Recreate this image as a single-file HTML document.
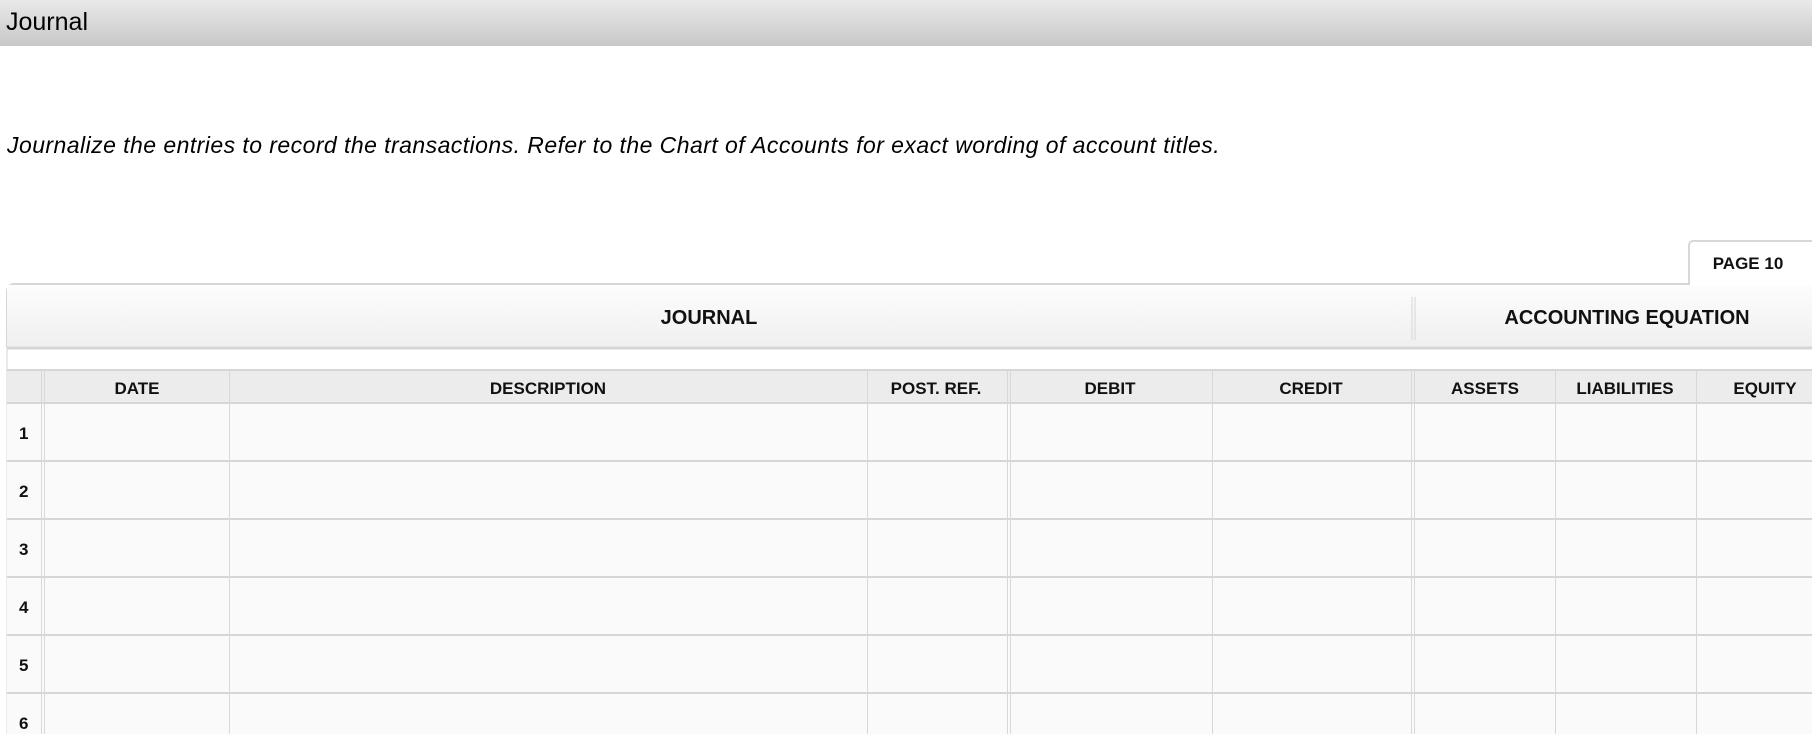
<!DOCTYPE html>
<html><head><style>
body{margin:0;width:1812px;height:734px;overflow:hidden;background:#fff;font-family:"Liberation Sans",sans-serif;position:relative}
.bar{position:absolute;left:0;top:0;width:1812px;height:46px;background:linear-gradient(#e9e9e9,#c8c8c8);}
.bar span{position:absolute;left:6px;top:8px;font-size:25px;color:#000}
.ins{position:absolute;left:7px;top:132px;font-size:23px;letter-spacing:0.45px;font-style:italic;color:#000;white-space:nowrap}
.tab{position:absolute;left:1688px;top:240px;width:130px;height:46px;border:2px solid #d8d8d8;border-bottom:none;border-radius:5px 0 0 0;background:#fff;font-size:17px;font-weight:bold;text-align:center;line-height:44px;box-sizing:border-box;padding-right:10px;color:#111}
.t{position:absolute;font-size:17px;font-weight:bold;color:#111;white-space:nowrap}
.c{position:absolute;transform:translateX(-50%)}
</style></head><body>
<div class="bar"><span>Journal</span></div>
<div class="ins">Journalize the entries to record the transactions. Refer to the Chart of Accounts for exact wording of account titles.</div>
<div class="tab">PAGE 10</div>
<svg style="position:absolute;left:0;top:0" width="1812" height="734">
<defs><linearGradient id="g" x1="0" y1="0" x2="0" y2="1"><stop offset="0" stop-color="#fdfdfd"/><stop offset="1" stop-color="#efefef"/></linearGradient></defs>
<path d="M7 348 V292 Q7 284 15 284 H1690" fill="url(#g)" stroke="#d6d6d6" stroke-width="2"/>
<rect x="7" y="285" width="1805" height="63" fill="url(#g)"/>
<line x1="7" y1="348" x2="1812" y2="348" stroke="#d6d6d6" stroke-width="3"/>
<line x1="1412" y1="297" x2="1412" y2="340" stroke="#d6d6d6"/><line x1="1415" y1="297" x2="1415" y2="340" stroke="#d6d6d6"/>
<rect x="7" y="350" width="1805" height="20" fill="#fff"/>
<line x1="7" y1="349" x2="7" y2="734" stroke="#d6d6d6"/>
<rect x="7" y="370" width="1805" height="33" fill="#ececec"/>
<line x1="7" y1="370" x2="1812" y2="370" stroke="#d6d6d6" stroke-width="2"/>
<rect x="7" y="404" width="1805" height="330" fill="#fafafa"/>
<g stroke="#d6d6d6" stroke-width="2">
<line x1="7" y1="403" x2="1812" y2="403"/><line x1="7" y1="461" x2="1812" y2="461"/><line x1="7" y1="519" x2="1812" y2="519"/><line x1="7" y1="577" x2="1812" y2="577"/><line x1="7" y1="635" x2="1812" y2="635"/><line x1="7" y1="693" x2="1812" y2="693"/>
</g>
<g stroke="#d8d8d8" stroke-width="1">
<line x1="41.5" y1="371" x2="41.5" y2="734"/><line x1="44.5" y1="371" x2="44.5" y2="734"/>
<line x1="229.5" y1="371" x2="229.5" y2="734"/>
<line x1="867.5" y1="371" x2="867.5" y2="734"/>
<line x1="1007.5" y1="371" x2="1007.5" y2="734"/><line x1="1010.5" y1="371" x2="1010.5" y2="734"/>
<line x1="1212.5" y1="371" x2="1212.5" y2="734"/>
<line x1="1411.5" y1="371" x2="1411.5" y2="734"/><line x1="1414.5" y1="371" x2="1414.5" y2="734"/>
<line x1="1555.5" y1="371" x2="1555.5" y2="734"/>
<line x1="1696.5" y1="371" x2="1696.5" y2="734"/>
</g>
</svg>
<div class="t c" style="left:709px;top:307px;font-size:20px">JOURNAL</div>
<div class="t c" style="left:1627px;top:307px;font-size:20px">ACCOUNTING EQUATION</div>
<div class="t c" style="left:137px;top:379px">DATE</div>
<div class="t c" style="left:548px;top:379px">DESCRIPTION</div>
<div class="t c" style="left:936px;top:379px">POST. REF.</div>
<div class="t c" style="left:1110px;top:379px">DEBIT</div>
<div class="t c" style="left:1311px;top:379px">CREDIT</div>
<div class="t c" style="left:1485px;top:379px">ASSETS</div>
<div class="t c" style="left:1625px;top:379px">LIABILITIES</div>
<div class="t c" style="left:1765px;top:379px">EQUITY</div>
<div class="t" style="left:19px;top:424px">1</div>
<div class="t" style="left:19px;top:482px">2</div>
<div class="t" style="left:19px;top:540px">3</div>
<div class="t" style="left:19px;top:598px">4</div>
<div class="t" style="left:19px;top:656px">5</div>
<div class="t" style="left:19px;top:714px">6</div>
</body></html>
